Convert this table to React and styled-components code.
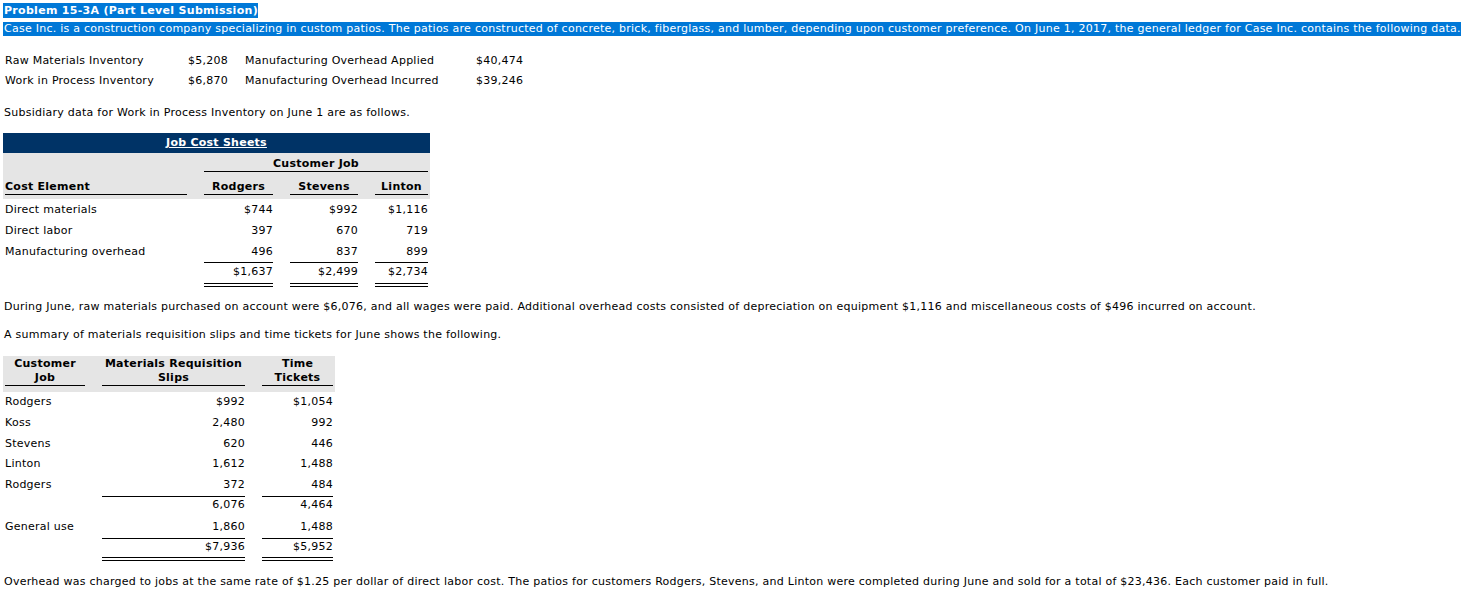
import React from "react";
import styled, { createGlobalStyle } from "styled-components";

const Global = createGlobalStyle`
  html, body { margin: 0; padding: 0; background: #fff; }
  body {
    font-family: Verdana, "DejaVu Sans", sans-serif;
    font-size: 11px;
    letter-spacing: 0.25px;
    color: #000;
  }
`;

const Page = styled.div`
  padding: 3px 0 0 3px;
  display: flex;
  flex-direction: column;
  align-items: flex-start;
`;

const Title = styled.div`
  height: ${(p) => p.$h || 19}px;
  white-space: nowrap;
`;

const Highlight = styled.span`
  display: inline-block;
  vertical-align: top;
  background: #0078d7;
  color: #fff;
  line-height: ${(p) => (p.$h ? p.$h : 15)}px;
  font-weight: ${(p) => (p.$bold ? "bold" : "normal")};
  letter-spacing: ${(p) => (p.$bold ? "0.3px" : "0.25px")};
  padding-left: 1px;
`;

const Para = styled.p`
  margin: ${(p) => p.$mt || 0}px 0 0 0;
  line-height: 14px;
  white-space: nowrap;
  padding-left: 1px;
`;

const Table = styled.table`
  border-collapse: collapse;
  margin-top: ${(p) => p.$mt || 0}px;
  font-size: 11px;
`;

const Cell = styled.td`
  padding: 3px 0 3px 17px;
  line-height: ${(p) => p.$lh || 15}px;
  text-align: ${(p) => (p.$right ? "right" : "left")};
  white-space: nowrap;
  vertical-align: middle;
  &:first-child { padding-left: 2px; }
  &:last-child { padding-right: 2px; }
`;

const SumCell = styled.td`
  padding: 0 0 ${(p) => p.$pb || 0}px 17px;
  line-height: 14px;
  text-align: right;
  white-space: nowrap;
  vertical-align: top;
  &:first-child { padding-left: 2px; }
  &:last-child { padding-right: 2px; }
`;

const Inner = styled.div`
  width: ${(p) => p.$w}px;
`;

const SubRule = styled.div`
  width: ${(p) => p.$w}px;
  border-top: 1px solid #000;
  padding-top: ${(p) => p.$pt || 1}px;
  ${(p) => p.$double && "border-bottom: 4px double #000;"}
  padding-bottom: ${(p) => p.$pb || 0}px;
`;

const BarCell = styled.td`
  background: #003366;
  color: #fff;
  font-weight: bold;
  text-align: center;
  height: 20px;
  padding: 0;
  line-height: 14px;
  & span { text-decoration: underline; }
`;

const HeadRow = styled.tr`
  background: #e5e5e5;
`;

const HeadCell = styled.th`
  font-weight: bold;
  padding: ${(p) => p.$pad || "3px 0 5px 17px"};
  line-height: 14px;
  vertical-align: bottom;
  text-align: ${(p) => (p.$left ? "left" : "center")};
  white-space: nowrap;
  &:first-child { padding-left: 2px; }
  &:last-child { padding-right: 2px; }
`;

const Rule = styled.div`
  border-bottom: 1px solid #000;
  width: ${(p) => (p.$w ? p.$w + "px" : "auto")};
`;

const Ledger = () => (
  <Table $mt={15}>
    <tbody>
      <tr>
        <Cell $lh={14}><Inner $w={166}>Raw Materials Inventory</Inner></Cell>
        <Cell $lh={14} $right><Inner $w={40}>$5,208</Inner></Cell>
        <Cell $lh={14}><Inner $w={214}>Manufacturing Overhead Applied</Inner></Cell>
        <Cell $lh={14} $right><Inner $w={47}>$40,474</Inner></Cell>
      </tr>
      <tr>
        <Cell $lh={14}><Inner $w={166}>Work in Process Inventory</Inner></Cell>
        <Cell $lh={14} $right><Inner $w={40}>$6,870</Inner></Cell>
        <Cell $lh={14}><Inner $w={214}>Manufacturing Overhead Incurred</Inner></Cell>
        <Cell $lh={14} $right><Inner $w={47}>$39,246</Inner></Cell>
      </tr>
    </tbody>
  </Table>
);

const jobCols = [182, 69, 68, 53];
const jobRows = [
  ["Direct materials", "$744", "$992", "$1,116"],
  ["Direct labor", "397", "670", "719"],
  ["Manufacturing overhead", "496", "837", "899"],
];

const JobCostTable = () => (
  <Table $mt={13}>
    <tbody>
      <tr>
        <BarCell colSpan={4}><span>Job Cost Sheets</span></BarCell>
      </tr>
      <HeadRow>
        <HeadCell $pad="4px 0 4px 2px" />
        <HeadCell colSpan={3} $pad="4px 2px 4px 17px"><Rule>Customer Job</Rule></HeadCell>
      </HeadRow>
      <HeadRow>
        <HeadCell $left $pad="4px 0 4px 2px"><Rule $w={jobCols[0]}>Cost Element</Rule></HeadCell>
        <HeadCell $pad="4px 0 4px 17px"><Rule $w={jobCols[1]}>Rodgers</Rule></HeadCell>
        <HeadCell $pad="4px 0 4px 17px"><Rule $w={jobCols[2]}>Stevens</Rule></HeadCell>
        <HeadCell $pad="4px 2px 4px 17px"><Rule $w={jobCols[3]}>Linton</Rule></HeadCell>
      </HeadRow>
      {jobRows.map((r) => (
        <tr key={r[0]}>
          {r.map((v, i) => (
            <Cell key={i} $right={i > 0}><Inner $w={jobCols[i]}>{v}</Inner></Cell>
          ))}
        </tr>
      ))}
      <tr>
        <SumCell />
        {["$1,637", "$2,499", "$2,734"].map((v, i) => (
          <SumCell key={v}>
            <SubRule $w={jobCols[i + 1]} $pt={2} $pb={4} $double>{v}</SubRule>
          </SumCell>
        ))}
      </tr>
    </tbody>
  </Table>
);

const slipCols = [80, 143, 71];
const slipRows = [
  ["Rodgers", "$992", "$1,054"],
  ["Koss", "2,480", "992"],
  ["Stevens", "620", "446"],
  ["Linton", "1,612", "1,488"],
  ["Rodgers", "372", "484"],
];

const SlipTable = () => (
  <Table $mt={14}>
    <tbody>
      <HeadRow>
        <HeadCell $pad="1px 0 6px 17px"><Rule $w={slipCols[0]}>Customer<br />Job</Rule></HeadCell>
        <HeadCell $pad="1px 0 6px 17px"><Rule $w={slipCols[1]}>Materials Requisition<br />Slips</Rule></HeadCell>
        <HeadCell $pad="1px 0 6px 17px"><Rule $w={slipCols[2]}>Time<br />Tickets</Rule></HeadCell>
      </HeadRow>
      {slipRows.map((r, k) => (
        <tr key={k}>
          {r.map((v, i) => (
            <Cell key={i} $lh={14.8} $right={i > 0}><Inner $w={slipCols[i]}>{v}</Inner></Cell>
          ))}
        </tr>
      ))}
      <tr>
        <SumCell $pb={4} />
        <SumCell $pb={4}><SubRule $w={slipCols[1]}>6,076</SubRule></SumCell>
        <SumCell $pb={4}><SubRule $w={slipCols[2]}>4,464</SubRule></SumCell>
      </tr>
      <tr>
        <Cell $lh={16}><Inner $w={slipCols[0]}>General use</Inner></Cell>
        <Cell $lh={16} $right><Inner $w={slipCols[1]}>1,860</Inner></Cell>
        <Cell $lh={16} $right><Inner $w={slipCols[2]}>1,488</Inner></Cell>
      </tr>
      <tr>
        <SumCell />
        <SumCell><SubRule $w={slipCols[1]} $pb={3} $double>$7,936</SubRule></SumCell>
        <SumCell><SubRule $w={slipCols[2]} $pb={3} $double>$5,952</SubRule></SumCell>
      </tr>
    </tbody>
  </Table>
);

export default function App() {
  return (
    <>
      <Global />
      <Page>
        <Title $h={19}><Highlight $bold>Problem 15-3A (Part Level Submission)</Highlight></Title>
        <Title $h={14}>
          <Highlight $h={14}>
            Case Inc. is a construction company specializing in custom patios. The patios are constructed of concrete, brick, fiberglass, and lumber, depending upon customer preference. On June 1, 2017, the general ledger for Case Inc. contains the following data.
          </Highlight>
        </Title>
        <Ledger />
        <Para $mt={15}>Subsidiary data for Work in Process Inventory on June 1 are as follows.</Para>
        <JobCostTable />
        <Para $mt={13}>
          During June, raw materials purchased on account were $6,076, and all wages were paid. Additional overhead costs consisted of depreciation on equipment $1,116 and miscellaneous costs of $496 incurred on account.
        </Para>
        <Para $mt={14}>A summary of materials requisition slips and time tickets for June shows the following.</Para>
        <SlipTable />
        <Para $mt={14}>
          Overhead was charged to jobs at the same rate of $1.25 per dollar of direct labor cost. The patios for customers Rodgers, Stevens, and Linton were completed during June and sold for a total of $23,436. Each customer paid in full.
        </Para>
      </Page>
    </>
  );
}
